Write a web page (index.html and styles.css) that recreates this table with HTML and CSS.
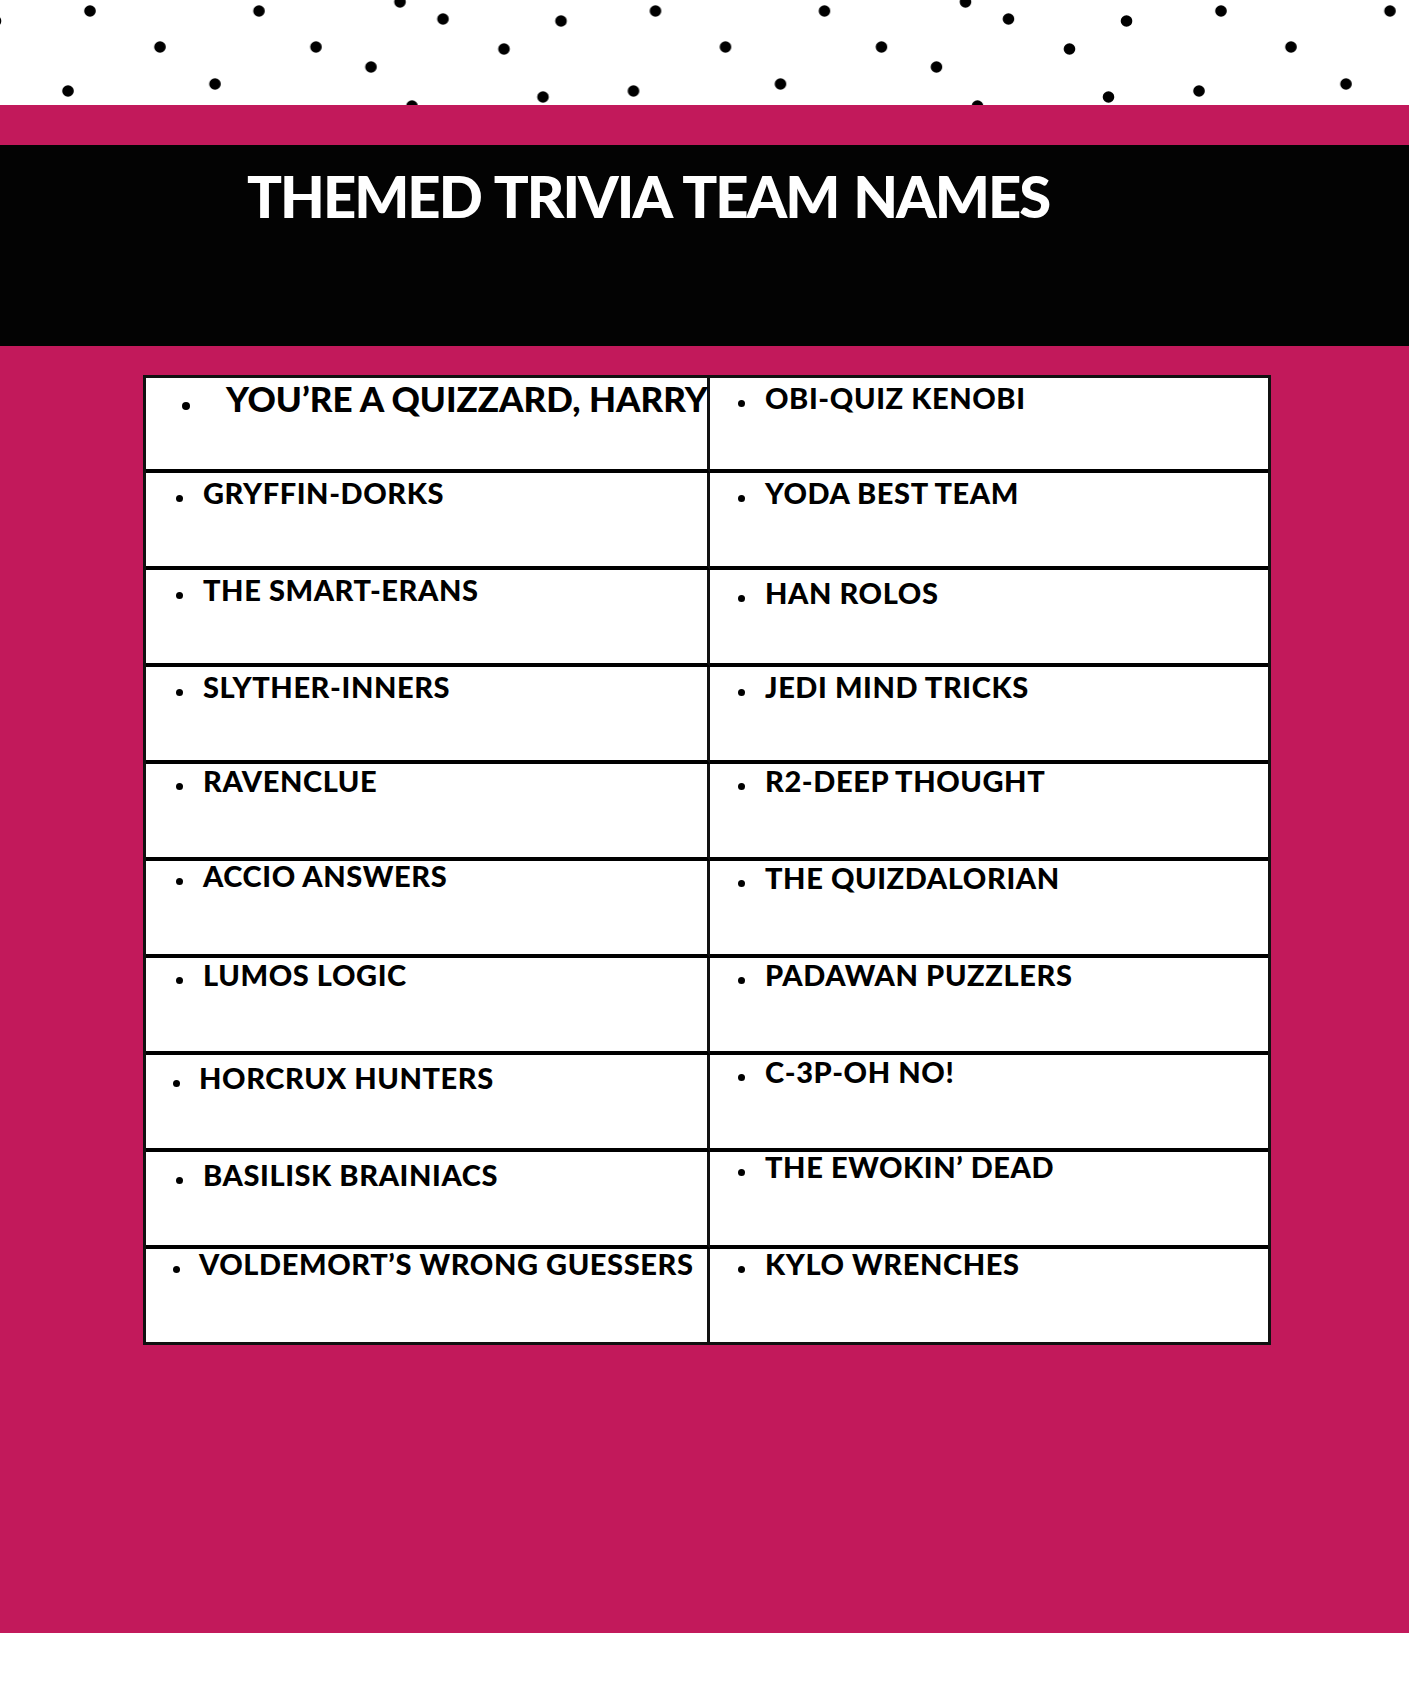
FILE: index.html
```html
<!DOCTYPE html>
<html lang="en">
<head>
<meta charset="utf-8">
<title>Themed Trivia Team Names</title>
<link rel="stylesheet" href="styles.css">
</head>
<body>
<header class="dots" aria-hidden="true">
  <svg class="dots__art" width="1409" height="105" viewBox="0 0 1409 105">
    <defs>
      <pattern id="dotTile" x="0" y="0" width="565.5" height="130" patternUnits="userSpaceOnUse">
        <g fill="#000">
          <circle cx="90" cy="11" r="5.8"/>
          <circle cx="259" cy="11" r="5.8"/>
          <circle cx="400" cy="2" r="5.8"/>
          <circle cx="443" cy="19" r="5.8"/>
          <circle cx="561" cy="21" r="5.8"/>
          <circle cx="-4.5" cy="21" r="5.8"/>
          <circle cx="160" cy="47" r="5.8"/>
          <circle cx="316" cy="47" r="5.8"/>
          <circle cx="504" cy="49" r="5.8"/>
          <circle cx="371" cy="67" r="5.8"/>
          <circle cx="68" cy="91" r="5.8"/>
          <circle cx="215" cy="84" r="5.8"/>
          <circle cx="543" cy="97" r="5.8"/>
          <circle cx="412" cy="106" r="5.8"/>
        </g>
      </pattern>
    </defs>
    <rect width="1409" height="105" fill="url(#dotTile)"/>
  </svg>
</header>

<main class="poster">
  <section class="banner">
    <h1 class="banner__title">THEMED TRIVIA TEAM NAMES</h1>
  </section>

  <div class="names">
    <div class="cell cell--left cell--lead cell--lo"><span class="item">YOU’RE A QUIZZARD, HARRY</span></div>
    <div class="cell cell--lo"><span class="item">OBI-QUIZ KENOBI</span></div>

    <div class="cell cell--left cell--lo"><span class="item">GRYFFIN-DORKS</span></div>
    <div class="cell cell--lo"><span class="item">YODA BEST TEAM</span></div>

    <div class="cell cell--left cell--lo"><span class="item">THE SMART-ERANS</span></div>
    <div class="cell cell--lower"><span class="item">HAN ROLOS</span></div>

    <div class="cell cell--left cell--lo"><span class="item">SLYTHER-INNERS</span></div>
    <div class="cell cell--lo"><span class="item">JEDI MIND TRICKS</span></div>

    <div class="cell cell--left cell--mid"><span class="item">RAVENCLUE</span></div>
    <div class="cell cell--mid"><span class="item">R2-DEEP THOUGHT</span></div>

    <div class="cell cell--left cell--hi"><span class="item">ACCIO ANSWERS</span></div>
    <div class="cell cell--mid"><span class="item">THE QUIZDALORIAN</span></div>

    <div class="cell cell--left cell--mid"><span class="item">LUMOS LOGIC</span></div>
    <div class="cell cell--mid"><span class="item">PADAWAN PUZZLERS</span></div>

    <div class="cell cell--left cell--lower cell--tight"><span class="item">HORCRUX HUNTERS</span></div>
    <div class="cell cell--mid"><span class="item">C-3P-OH NO!</span></div>

    <div class="cell cell--left cell--lower"><span class="item">BASILISK BRAINIACS</span></div>
    <div class="cell cell--hi"><span class="item">THE EWOKIN’ DEAD</span></div>

    <div class="cell cell--left cell--hi cell--tight"><span class="item">VOLDEMORT’S WRONG GUESSERS</span></div>
    <div class="cell cell--hi"><span class="item">KYLO WRENCHES</span></div>
  </div>
</main>

<footer class="foot"></footer>
</body>
</html>
```

FILE: styles.css
```css
html, body {
  margin: 0;
  padding: 0;
  background: #ffffff;
}

body {
  width: 1409px;
  font-family: "Lato", "Liberation Sans", sans-serif;
}

/* dotted strip */
.dots {
  height: 105px;
  background: #ffffff;
  overflow: hidden;
}

.dots__art {
  display: block;
}

/* pink poster */
.poster {
  background: #c2195b;
  padding: 40px 0 288px;
}

.banner {
  height: 201px;
  box-sizing: border-box;
  background: #030303;
  padding: 21px 0 0 247px;
}

.banner__title {
  margin: 0;
  color: #ffffff;
  font-family: "Lato", "Liberation Sans", sans-serif;
  font-weight: 900;
  font-size: 58px;
  line-height: 60px;
  letter-spacing: -2px;
  word-spacing: 3px;
  white-space: nowrap;
}

/* names table */
.names {
  margin: 29px 0 0 143px;
  width: 1128px;
  box-sizing: border-box;
  border: 3px solid #111111;
  background: #ffffff;
  display: grid;
  grid-template-columns: 564px 558px;
  grid-template-rows: 95px repeat(8, 97px) 93px;
}

.cell {
  box-sizing: border-box;
  border-bottom: 4px solid #000000;
  padding: 5px 0 0 28px;
  color: #000000;
  font-weight: 900;
  font-size: 29px;
  line-height: 29px;
  letter-spacing: 0.6px;
  white-space: nowrap;
}

.names .cell:nth-last-child(-n+2) {
  border-bottom: 0;
}

.cell--left {
  border-right: 3px solid #111111;
  padding-left: 30px;
}

.item::before {
  content: "";
  display: inline-block;
  width: 7px;
  height: 7px;
  border-radius: 50%;
  background: #000000;
  margin: 0 20px 2.5px 0;
  vertical-align: baseline;
}

.cell--lead {
  font-size: 35px;
  line-height: 35px;
  letter-spacing: 0;
  padding-left: 36px;
}

.cell--lead .item::before {
  width: 8px;
  height: 8px;
  margin-right: 36px;
}

.cell--left.cell--tight {
  padding-left: 27px;
}

.cell--tight .item::before {
  margin-right: 19px;
}

.cell--hi { padding-top: 0; }
.cell--mid { padding-top: 2px; }
.cell--lo { padding-top: 5px; }
.cell--lower { padding-top: 8px; }
.cell--lead.cell--lo { padding-top: 3px; }

.foot {
  height: 57px;
  background: #ffffff;
}
```
